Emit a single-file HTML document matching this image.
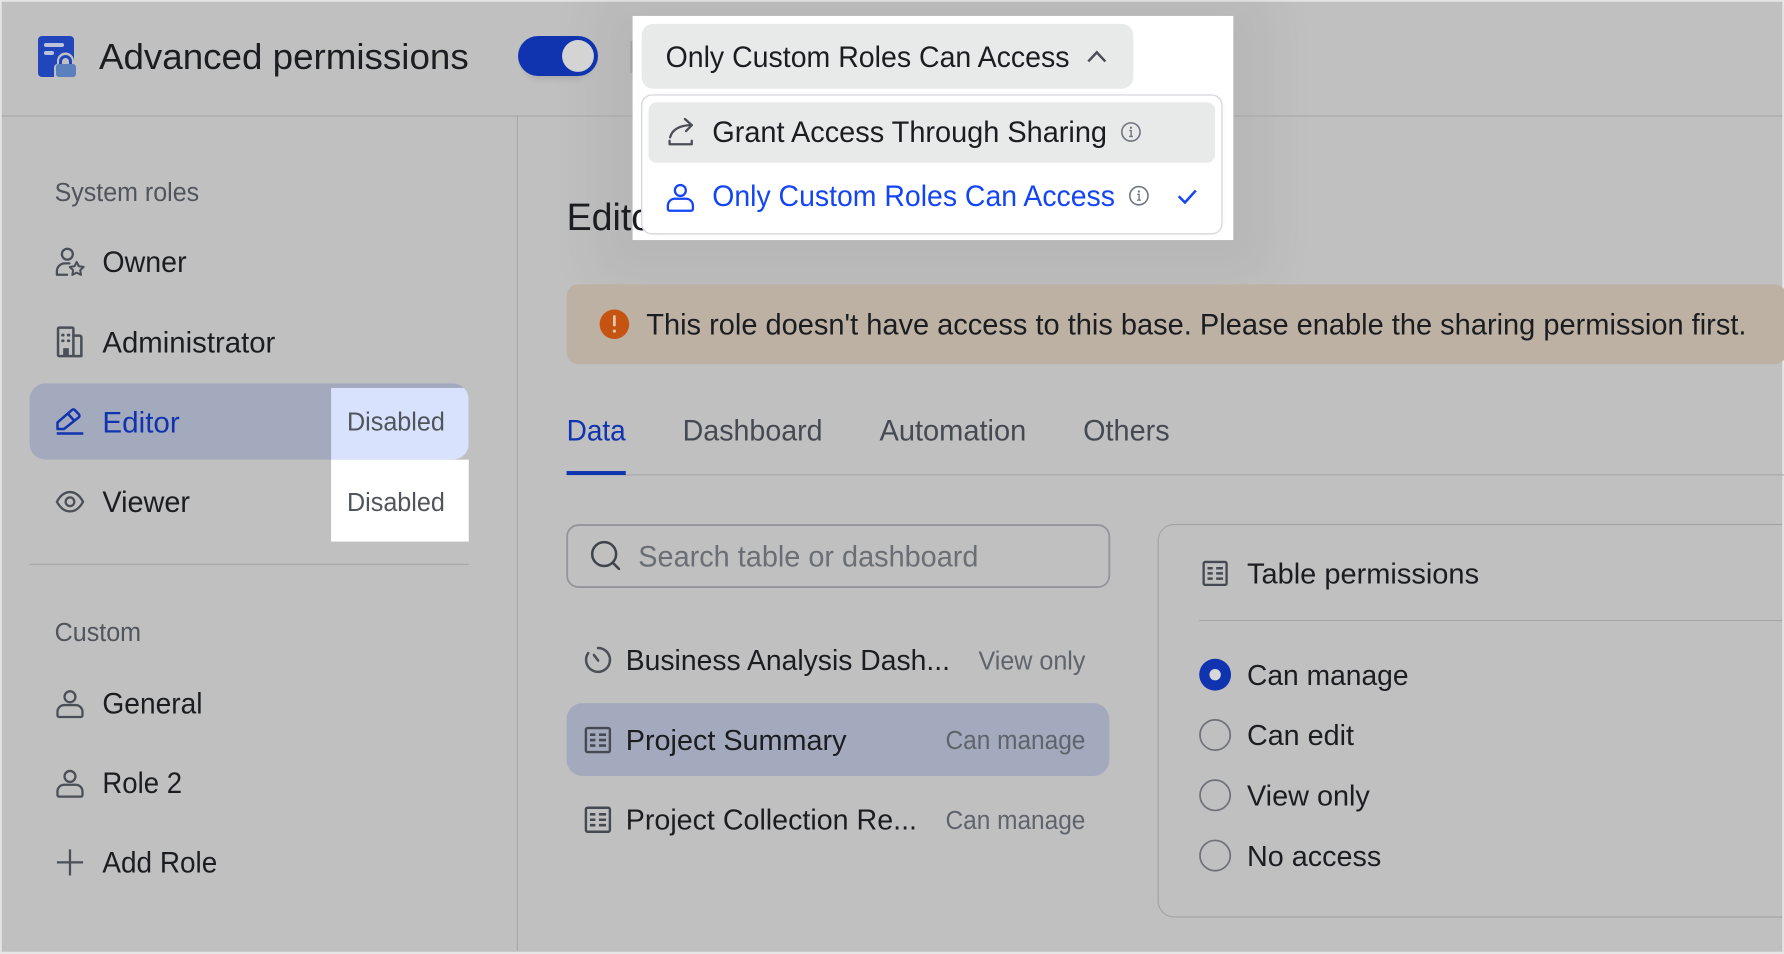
<!DOCTYPE html>
<html lang="en"><head><meta charset="utf-8"><title>Advanced permissions</title>
<style>
html,body{margin:0;padding:0;background:#e6e6e6;width:1784px;height:954px;overflow:hidden}
svg{display:block}
text{font-family:"Liberation Sans",sans-serif;fill:#1b1d21}
.b{font-size:26px}.s{font-size:22.5px;fill:#50555d}.m{font-size:25px}.bl{fill:#1033b0}.br{fill:#1445f5}
.ic{fill:none;stroke:#4a4f57;stroke-width:2;stroke-linecap:round;stroke-linejoin:round}
</style></head><body>
<svg width="1784" height="954" viewBox="0 0 1568 838.5" xmlns="http://www.w3.org/2000/svg">
<defs>
<filter id="sh" x="-20%" y="-30%" width="140%" height="170%"><feGaussianBlur stdDeviation="22"/></filter>
<filter id="sh2" x="-10%" y="-20%" width="120%" height="140%"><feGaussianBlur stdDeviation="4"/></filter>
<filter id="sh3" x="-20%" y="-30%" width="140%" height="170%"><feGaussianBlur stdDeviation="3"/></filter>
<clipPath id="rc"><rect x="26" y="337" width="386" height="67" rx="14"/></clipPath>
<symbol id="person" viewBox="0 0 24 26" overflow="visible"><circle cx="12" cy="7.400" r="4.800" fill="none" stroke="currentColor" stroke-width="2"/><path d="M7 14.700h10a6 6 0 0 1 6 6v3a1.500 1.500 0 0 1-1.500 1.500H2.500A1.500 1.500 0 0 1 1 23.700v-3a6 6 0 0 1 6-6z" fill="none" stroke="currentColor" stroke-width="2" stroke-linejoin="round"/></symbol>
<symbol id="table" viewBox="0 0 24 24" overflow="visible"><rect x="1" y="1" width="22" height="22" rx="1.500" fill="none" stroke="#454a52" stroke-width="2.200"/><path d="M4.700 7h5M13 7h6.500M4.700 12h5M13 12h6.500M4.700 17h5M13 17h6.500" stroke="#454a52" stroke-width="2.400" fill="none"/></symbol>
<symbol id="info" viewBox="0 0 18 18" overflow="visible"><circle cx="9" cy="9" r="8" fill="none" stroke="#6f7580" stroke-width="1.400"/><path d="M7.600 7.800h1.600v5M7.400 12.900h3.400" fill="none" stroke="#6f7580" stroke-width="1.200"/><circle cx="9" cy="5.300" r="1" fill="#6f7580"/></symbol>
</defs>
<rect width="1568" height="838.5" fill="#e6e6e6"/>
<rect x="1.5" y="1.5" width="1565" height="835" fill="#c0c0c0"/>
<rect x="520" y="-10" width="600" height="260" fill="#000" opacity=".045" filter="url(#sh)"/>
<rect x="1.5" y="101.500" width="1565" height=".9" fill="#a6a6a6"/>
<rect x="454.300" y="102" width=".9" height="734" fill="#a6a6a6"/>

<!-- header -->
<g transform="scale(.8789)">
<rect x="38" y="36" width="36" height="41" rx="4" fill="#2146bc"/>
<rect x="44" y="43" width="20" height="4" rx="2" fill="#bcc3d6"/>
<rect x="44" y="51" width="10" height="4" rx="2" fill="#bcc3d6"/>
<path d="M54 78V68a4 4 0 0 1 3-4v-3a8.500 8.500 0 0 1 17 0v3a4 4 0 0 1 3 4v10z" fill="#c0c0c0"/>
<path d="M60.500 66v-4.500a5 5 0 0 1 10 0V66" fill="none" stroke="#2146bc" stroke-width="3"/>
<rect x="56" y="64" width="20" height="13" rx="3" fill="#5b80bd"/>
</g>
<text x="87" y="60.500" style="font-size:32px" textLength="325" lengthAdjust="spacingAndGlyphs">Advanced permissions</text>
<rect x="460" y="38" width="60" height="31" rx="15" fill="#000" opacity=".12" filter="url(#sh3)"/>
<rect x="455.300" y="31.600" width="70.300" height="35.200" rx="17.600" fill="#1033b0"/>
<circle cx="508" cy="49.200" r="14" fill="#d4d4d4"/>
<rect x="554" y="36" width="2" height="28" fill="#a2a2a2"/>

<!-- sidebar -->
<text class="s" x="48" y="176.500" textLength="127" lengthAdjust="spacingAndGlyphs">System roles</text>
<g class="ic"><circle cx="59.200" cy="223.400" r="4.800"/><path d="M50 241.500v-3a7 7 0 0 1 7-7h4M50 241.500h9"/><path d="M67.400 230.200l1.900 3.800 4.200.6-3 2.900.7 4.100-3.800-2-3.800 2 .7-4.100-3-2.900 4.200-.6z" stroke-width="1.800"/></g>
<text class="b" x="90" y="239" textLength="74" lengthAdjust="spacingAndGlyphs">Owner</text>
<g class="ic" style="stroke-width:2.200"><rect x="51" y="288" width="13.500" height="25" rx="1"/><path d="M64.500 295h5.500a1.500 1.500 0 0 1 1.500 1.500V313H64.500"/><path d="M55 294.500h.5M60 294.500h.5M55 299.500h.5M60 299.500h.5" stroke-width="2.500"/><rect x="55.500" y="306" width="5" height="7" fill="#4a4f57" stroke="none"/></g>
<text class="b" x="90" y="310" textLength="152" lengthAdjust="spacingAndGlyphs">Administrator</text>
<rect x="26" y="337" width="386" height="67" rx="14" fill="#a4aabd"/>
<rect x="291" y="341" width="121" height="63" fill="#d9e2fd" clip-path="url(#rc)"/>
<rect x="291" y="404" width="121" height="72" fill="#fff"/>
<g transform="scale(.8789)" fill="none" stroke="#1033b0" stroke-width="2.500" stroke-linejoin="round"><path d="M56.700 433.500h26.600"/><path d="M57.500 429v-6.500L72 410a2 2 0 0 1 2.800 0l4.200 4.500a2 2 0 0 1-.2 2.800L64 429z"/><path d="M68 413.800l6.500 7.200"/></g>
<text class="b bl" x="90" y="380" textLength="68" lengthAdjust="spacingAndGlyphs">Editor</text>
<text class="s" x="305" y="378.500" textLength="86" lengthAdjust="spacingAndGlyphs">Disabled</text>
<g class="ic"><path d="M50 441c3-5.500 7-8.500 11.500-8.500S70 435.500 73 441c-3 5.500-7 8.500-11.500 8.500S53 446.500 50 441z"/><circle cx="61.500" cy="441" r="3.800"/></g>
<text class="b" x="90" y="450" textLength="77" lengthAdjust="spacingAndGlyphs">Viewer</text>
<text class="s" x="305" y="449" textLength="86" lengthAdjust="spacingAndGlyphs">Disabled</text>
<rect x="26" y="495.500" width="386" height=".9" fill="#a3a3a3"/>
<text class="s" x="48" y="563.500" textLength="76" lengthAdjust="spacingAndGlyphs">Custom</text>
<use href="#person" x="49.500" y="605" width="24" height="26" color="#4a4f57"/>
<text class="b" x="90" y="627" textLength="88" lengthAdjust="spacingAndGlyphs">General</text>
<use href="#person" x="49.500" y="675" width="24" height="26" color="#4a4f57"/>
<text class="b" x="90" y="697" textLength="70" lengthAdjust="spacingAndGlyphs">Role 2</text>
<path d="M50 758h23M61.500 746.500v23" fill="none" stroke="#4a4f57" stroke-width="2"/>
<text class="b" x="90" y="767" textLength="101" lengthAdjust="spacingAndGlyphs">Add Role</text>

<!-- main -->
<rect x="498" y="250" width="1072" height="70" rx="10" fill="#bdb1a3"/>
<circle cx="540" cy="285" r="13" fill="#c55413"/>
<rect x="538.800" y="277" width="2.400" height="10" rx="1.200" fill="#e6c8b0"/><circle cx="540" cy="291" r="1.400" fill="#e6c8b0"/>
<text class="b" x="568" y="294" textLength="967" lengthAdjust="spacingAndGlyphs">This role doesn't have access to this base. Please enable the sharing permission first.</text>
<text class="b bl" x="498" y="387" textLength="52" lengthAdjust="spacingAndGlyphs">Data</text>
<text class="b" style="fill:#454a52" x="600" y="387" textLength="123" lengthAdjust="spacingAndGlyphs">Dashboard</text>
<text class="b" style="fill:#454a52" x="773" y="387" textLength="129" lengthAdjust="spacingAndGlyphs">Automation</text>
<text class="b" style="fill:#454a52" x="952" y="387" textLength="76" lengthAdjust="spacingAndGlyphs">Others</text>
<rect x="498" y="417" width="1070" height=".9" fill="#a5a5a5"/>
<rect x="498" y="414" width="52" height="3.500" fill="#1033b0"/>

<rect x="498.500" y="461.500" width="476.500" height="54.500" rx="10" fill="none" stroke="#93959b" stroke-width="1.600"/>
<g class="ic" style="stroke:#3f444c;stroke-width:2.200"><circle cx="531" cy="487" r="10.500"/><path d="M539 495l5 5"/></g>
<text class="b" style="fill:#6a6e75" x="561" y="498" textLength="299" lengthAdjust="spacingAndGlyphs">Search table or dashboard</text>

<g class="ic" style="stroke-width:2.200"><path d="M525.600 569.500a10.500 10.500 0 1 1-8.600 4.500"/><path d="M525.800 580.600l-3.800-4.900"/></g>
<text class="m" x="550" y="589" textLength="285" lengthAdjust="spacingAndGlyphs">Business Analysis Dash...</text>
<text class="s" style="fill:#5f646c" x="860" y="588.500" textLength="94" lengthAdjust="spacingAndGlyphs">View only</text>
<rect x="498" y="618" width="477" height="64" rx="14" fill="#a4aabd"/>
<use href="#table" x="514" y="639" width="23" height="23"/>
<text class="m" x="550" y="659" textLength="194" lengthAdjust="spacingAndGlyphs">Project Summary</text>
<text class="s" style="fill:#5f646c" x="831" y="658.500" textLength="123" lengthAdjust="spacingAndGlyphs">Can manage</text>
<use href="#table" x="514" y="709" width="23" height="23"/>
<text class="m" x="550" y="729" textLength="256" lengthAdjust="spacingAndGlyphs">Project Collection Re...</text>
<text class="s" style="fill:#5f646c" x="831" y="728.500" textLength="123" lengthAdjust="spacingAndGlyphs">Can manage</text>

<path d="M1566.500 461H1032a14 14 0 0 0-14 14v317a14 14 0 0 0 14 14h534.500" fill="none" stroke="#a5a5a5" stroke-width="1.100"/>
<use href="#table" x="1057" y="493" width="22" height="22"/>
<text class="m" x="1096" y="513" textLength="204" lengthAdjust="spacingAndGlyphs">Table permissions</text>
<rect x="1054" y="545" width="512.500" height=".9" fill="#a5a5a5"/>
<circle cx="1068" cy="593" r="14" fill="#1033b0"/><circle cx="1068" cy="593" r="5" fill="#d8d8d8"/>
<text class="m" x="1096" y="602" textLength="142" lengthAdjust="spacingAndGlyphs">Can manage</text>
<circle cx="1068" cy="646" r="13.300" fill="none" stroke="#6e7278" stroke-width="1.500"/>
<text class="m" x="1096" y="655" textLength="94" lengthAdjust="spacingAndGlyphs">Can edit</text>
<circle cx="1068" cy="699" r="13.300" fill="none" stroke="#6e7278" stroke-width="1.500"/>
<text class="m" x="1096" y="708" textLength="108" lengthAdjust="spacingAndGlyphs">View only</text>
<circle cx="1068" cy="752" r="13.300" fill="none" stroke="#6e7278" stroke-width="1.500"/>
<text class="m" x="1096" y="761" textLength="118" lengthAdjust="spacingAndGlyphs">No access</text>

<!-- spotlight -->
<rect x="556" y="14" width="528" height="197" fill="#fff"/>
<text x="498" y="202" style="font-size:33px">Editor</text>
<rect x="564" y="21" width="432" height="57" rx="10" fill="#e8e9e9"/>
<text class="b" x="585" y="59" textLength="355" lengthAdjust="spacingAndGlyphs">Only Custom Roles Can Access</text>
<path d="M956.500 54l7.500-8 7.500 8" fill="none" stroke="#4a4f57" stroke-width="2.200"/>
<rect x="566" y="86" width="507" height="118" rx="9" fill="#000" opacity=".05" filter="url(#sh2)"/>
<rect x="564" y="83.500" width="510" height="122" rx="9" fill="#fff" stroke="#d5d8dd" stroke-width="1.200"/>
<rect x="570" y="90" width="498" height="53" rx="7" fill="#e8e9e9"/>
<g fill="none" stroke="#4a4f57" stroke-width="2" stroke-linecap="round" stroke-linejoin="round"><path d="M589 120.700c1.500-6.500 8-10.700 19-10.700"/><path d="M602 104.600l6 5.400-5 5.200"/><path d="M588.500 123.700v3.100h19.500v-3.100"/></g>
<text class="b" x="626" y="125" textLength="347" lengthAdjust="spacingAndGlyphs">Grant Access Through Sharing</text>
<use href="#info" x="985" y="107" width="18" height="18"/>
<use href="#person" x="586" y="160" width="24" height="26" color="#1445f5"/>
<text class="b br" x="626" y="181" textLength="354" lengthAdjust="spacingAndGlyphs">Only Custom Roles Can Access</text>
<use href="#info" x="992" y="163" width="18" height="18"/>
<path d="M1036 172.500l5.500 5.500 9.500-10.500" fill="none" stroke="#1445f5" stroke-width="2.200"/>
</svg>
</body></html>
